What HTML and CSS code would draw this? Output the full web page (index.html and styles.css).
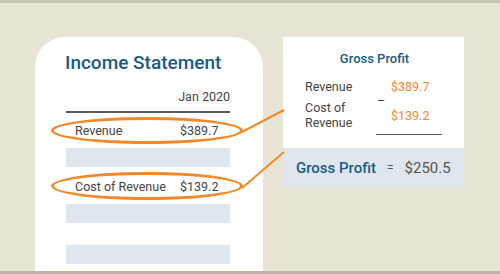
FILE: index.html
```html
<!DOCTYPE html>
<html>
<head>
<meta charset="utf-8">
<link rel="stylesheet" href="styles.css">
</head>
<body>
<div class="stage">
  <div class="card">
    <h1 class="title">Income Statement</h1>
    <div class="head">Jan 2020</div>
    <div class="hl row">
      <span>Revenue</span><span>$389.7</span>
    </div>
    <div class="bar"></div>
    <div class="hl row hl2">
      <span>Cost of Revenue</span><span>$139.2</span>
    </div>
    <div class="bar"></div>
    <div class="bar bar-last"></div>
  </div>
  <div class="panel">
    <div class="calc">
      <div class="calc-title">Gross Profit</div>
      <div class="calc-body">
        <div class="labels">
          <div class="lab">Revenue</div>
          <div class="lab lab2">Cost of<br>Revenue</div>
        </div>
        <div class="vals">
          <div class="val">$389.7</div>
          <div class="minus">–</div>
          <div class="val">$139.2</div>
        </div>
      </div>
    </div>
    <div class="result">
      <span class="res-label">Gross Profit</span>
      <span class="eq">=</span>
      <span class="res-val">$250.5</span>
    </div>
  </div>
  <svg class="links" width="500" height="274" viewBox="0 0 500 274">
    <line x1="242" y1="132" x2="284" y2="110"/>
    <line x1="242" y1="188" x2="284" y2="152"/>
  </svg>
</div>
</body>
</html>
```
FILE: styles.css
```css
html, body {
  margin: 0;
  padding: 0;
}
body {
  width: 500px;
  height: 274px;
  overflow: hidden;
  background: #e8e4d6;
  font-family: Roboto, "Liberation Sans", sans-serif;
}
.stage {
  position: relative;
  box-sizing: border-box;
  height: 274px;
  border-top: 3px solid #c9c5b5;
  border-bottom: 3px solid #bab6a6;
  display: flex;
  align-items: flex-start;
}
.card {
  box-sizing: border-box;
  width: 228px;
  height: 234px;
  margin: 34px 0 0 35px;
  background: #fff;
  border-radius: 30px 30px 0 0;
  padding: 14px 33px 0 31px;
  display: flex;
  flex-direction: column;
}
.title {
  margin: 0 0 0 -1px;
  font-size: 19px;
  line-height: 24px;
  font-weight: 500;
  color: #1b5b83;
  letter-spacing: 0;
}
.head {
  margin-top: 14px;
  text-align: right;
  font-size: 12.5px;
  line-height: 16px;
  color: #444;
  padding: 0 0 6px;
  border-bottom: 2.5px solid #5a5a5a;
}
.row {
  display: grid;
  grid-template-columns: 105px auto;
  align-items: center;
  font-size: 12.5px;
  color: #444;
}
.hl {
  box-sizing: border-box;
  height: 27px;
  margin: 4px -13px 0 -15px;
  padding-left: 21px;
  border: 3px solid #f0892a;
  border-radius: 50%;
}
.hl2 {
  height: 28px;
  margin-top: 5px;
}
.bar {
  height: 19px;
  margin-top: 4px;
  background: #dfe6ee;
}
.bar-last {
  margin-top: 22px;
}
.panel {
  width: 181px;
  margin: 34px 0 0 20px;
  display: flex;
  flex-direction: column;
}
.calc {
  background: #fff;
  height: 111px;
  box-sizing: border-box;
  padding-top: 14px;
}
.calc-title {
  text-align: center;
  font-size: 13px;
  line-height: 16px;
  font-weight: 500;
  color: #1b5b83;
  margin-left: 2px;
}
.calc-body {
  display: flex;
  padding-left: 22px;
  margin-top: 12px;
  font-size: 12.5px;
  color: #444;
}
.labels {
  width: 71px;
}
.lab {
  line-height: 15px;
}
.lab2 {
  margin-top: 6px;
}
.vals {
  width: 66px;
  border-bottom: 1.5px solid #555;
  padding-bottom: 11px;
}
.val {
  color: #f5862a;
  line-height: 15px;
  padding-left: 15px;
}
.minus {
  line-height: 14px;
  height: 14px;
  padding-left: 1px;
  color: #444;
}
.result {
  height: 39px;
  background: #dfe6ee;
  display: flex;
  align-items: center;
  padding-left: 13px;
  font-size: 15px;
  white-space: nowrap;
}
.res-label {
  color: #1b5b83;
  font-weight: 500;
}
.eq {
  color: #555;
  font-size: 12px;
  margin-left: 11px;
}
.res-val {
  color: #555;
  margin-left: 11px;
}
.links {
  position: absolute;
  left: 0;
  top: -3px;
  pointer-events: none;
}
.links line {
  stroke: #f0892a;
  stroke-width: 2;
}
```
